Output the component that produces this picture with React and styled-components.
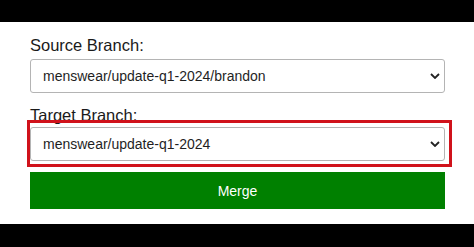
import React from 'react'
import styled, { createGlobalStyle } from 'styled-components'

const GlobalStyle = createGlobalStyle`
    html, body {
        margin: 0;
        padding: 0;
        background: #000;
    }

    * {
        box-sizing: border-box;
    }
`

const Page = styled.div`
    width: 474px;
    height: 247px;
    display: flex;
    flex-direction: column;
    background: #000;
    font-family: 'Liberation Sans', Arial, sans-serif;
`

const Bar = styled.div`
    height: ${props => props.height}px;
    background: #000;
    flex-shrink: 0;
`

const Panel = styled.div`
    height: 202px;
    background: #fff;
    padding: 13px 29px 0 30px;
    display: flex;
    flex-direction: column;
`

const Label = styled.label`
    font-size: 16.5px;
    line-height: 20px;
    color: #1a1a1a;
    margin-top: ${props => props.top || 0}px;
`

const Field = styled.div`
    position: relative;
    margin-top: ${props => props.top || 0}px;
`

const Select = styled.select`
    appearance: none;
    width: 100%;
    height: 34px;
    padding: 0 28px 0 12px;
    border: 1px solid #b4b4b4;
    border-radius: 3px;
    background: #fff;
    color: #1f1f1f;
    font-family: inherit;
    font-size: 14px;
    outline: none;
`

const Chevron = styled.svg`
    position: absolute;
    right: 5px;
    top: 50%;
    margin-top: -3px;
    width: 10px;
    height: 6px;
    pointer-events: none;
`

// red annotation box drawn over the target select
const Highlight = styled.div`
    position: relative;

    &::after {
        content: '';
        position: absolute;
        top: -5px;
        bottom: -6px;
        left: -3px;
        right: -7px;
        border: 3px solid #d0121b;
        pointer-events: none;
    }
`

const Button = styled.button`
    margin-top: 11px;
    height: 37px;
    width: 100%;
    border: none;
    background: #008000;
    color: #fff;
    font-family: inherit;
    font-size: 14px;
    cursor: pointer;
`

const BranchSelect = ({ value, top }) => (
    <Field top={top}>
        <Select defaultValue={value}>
            <option>{value}</option>
        </Select>
        <Chevron viewBox="0 0 10 6">
            <path d="M1 1 L5 5 L9 1" fill="none" stroke="#222" strokeWidth="1.8" />
        </Chevron>
    </Field>
)

export default function App() {
    return (
        <Page>
            <GlobalStyle />
            <Bar height={22} />
            <Panel>
                <Label>Source Branch:</Label>
                <BranchSelect value="menswear/update-q1-2024/brandon" top={4} />
                <Label top={12}>Target Branch:</Label>
                <Highlight>
                    <BranchSelect value="menswear/update-q1-2024" top={2} />
                </Highlight>
                <Button>Merge</Button>
            </Panel>
            <Bar height={23} />
        </Page>
    )
}
